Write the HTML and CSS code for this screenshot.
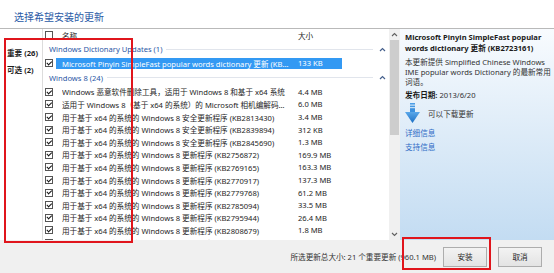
FILE: index.html
```html
<!DOCTYPE html>
<html lang="zh-CN">
<head>
    <meta charset="UTF-8">
    <title>Windows 更新 - 选择希望安装的更新</title>
    <link rel="stylesheet" href="styles.css">
</head>
<body>
    <div class="window">
        <!-- Title -->
        <div class="title-bar">
            <h1>选择希望安装的更新</h1>
        </div>

        <div class="main">
            <!-- Categories -->
            <ul class="categories">
                <li>重要 (26)</li>
                <li>可选 (2)</li>
            </ul>

            <!-- Update list -->
            <div class="update-list">
                <div class="list-head">
                    <span class="box"></span>
                    <span class="col-name">名称</span>
                    <span class="col-size">大小</span>
                </div>

                <div class="group">
                    <span>Windows Dictionary Updates (1)</span>
                    <i class="group-line"></i>
                    <svg class="chevron" width="7" height="5" viewBox="0 0 7 5"><path d="M1 4 L3.5 1.5 L6 4" fill="none" stroke="#45608c" stroke-width="1.2"/></svg>
                </div>
                <div class="row selected">
                    <span class="box checked"></span>
                    <span class="cell"><span class="name">Microsoft Pinyin SimpleFast popular words dictionary 更新 (KB2723161)</span><span class="size">133 KB</span></span>
                </div>

                <div class="group">
                    <span>Windows 8 (24)</span>
                    <i class="group-line"></i>
                    <svg class="chevron" width="7" height="5" viewBox="0 0 7 5"><path d="M1 4 L3.5 1.5 L6 4" fill="none" stroke="#45608c" stroke-width="1.2"/></svg>
                </div>
                <div class="row">
                    <span class="box checked"></span>
                    <span class="cell"><span class="name">Windows 恶意软件删除工具，适用于 Windows 8 和基于 x64 系统</span><span class="size">4.4 MB</span></span>
                </div>
                <div class="row">
                    <span class="box checked"></span>
                    <span class="cell"><span class="name">适用于 Windows 8（基于 x64 的系统）的 Microsoft 相机编解码器包</span><span class="size">6.0 MB</span></span>
                </div>
                <div class="row">
                    <span class="box checked"></span>
                    <span class="cell"><span class="name">用于基于 x64 的系统的 Windows 8 安全更新程序 (KB2813430)</span><span class="size">3.4 MB</span></span>
                </div>
                <div class="row">
                    <span class="box checked"></span>
                    <span class="cell"><span class="name">用于基于 x64 的系统的 Windows 8 安全更新程序 (KB2839894)</span><span class="size">312 KB</span></span>
                </div>
                <div class="row">
                    <span class="box checked"></span>
                    <span class="cell"><span class="name">用于基于 x64 的系统的 Windows 8 安全更新程序 (KB2845690)</span><span class="size">1.3 MB</span></span>
                </div>
                <div class="row">
                    <span class="box checked"></span>
                    <span class="cell"><span class="name">用于基于 x64 的系统的 Windows 8 更新程序 (KB2756872)</span><span class="size">169.9 MB</span></span>
                </div>
                <div class="row">
                    <span class="box checked"></span>
                    <span class="cell"><span class="name">用于基于 x64 的系统的 Windows 8 更新程序 (KB2769165)</span><span class="size">163.3 MB</span></span>
                </div>
                <div class="row">
                    <span class="box checked"></span>
                    <span class="cell"><span class="name">用于基于 x64 的系统的 Windows 8 更新程序 (KB2770917)</span><span class="size">137.3 MB</span></span>
                </div>
                <div class="row">
                    <span class="box checked"></span>
                    <span class="cell"><span class="name">用于基于 x64 的系统的 Windows 8 更新程序 (KB2779768)</span><span class="size">61.2 MB</span></span>
                </div>
                <div class="row">
                    <span class="box checked"></span>
                    <span class="cell"><span class="name">用于基于 x64 的系统的 Windows 8 更新程序 (KB2785094)</span><span class="size">33.5 MB</span></span>
                </div>
                <div class="row">
                    <span class="box checked"></span>
                    <span class="cell"><span class="name">用于基于 x64 的系统的 Windows 8 更新程序 (KB2795944)</span><span class="size">26.4 MB</span></span>
                </div>
                <div class="row">
                    <span class="box checked"></span>
                    <span class="cell"><span class="name">用于基于 x64 的系统的 Windows 8 更新程序 (KB2808679)</span><span class="size">1.8 MB</span></span>
                </div>
                <div class="row">
                    <span class="box"></span>
                    <span class="cell"><span class="name">用于基于 x64 的系统的 Windows 8 更新程序 (KB2811660)</span><span class="size">5.4 MB</span></span>
                </div>
            </div>

            <!-- Scrollbar -->
            <div class="scrollbar">
                <div class="sb-btn">
                    <svg width="7" height="5" viewBox="0 0 7 5"><path d="M1 4 L3.5 1.5 L6 4" fill="none" stroke="#606060" stroke-width="1.1"/></svg>
                </div>
                <div class="sb-thumb"></div>
                <div class="sb-track"></div>
                <div class="sb-btn">
                    <svg width="7" height="5" viewBox="0 0 7 5"><path d="M1 1 L3.5 3.5 L6 1" fill="none" stroke="#606060" stroke-width="1.1"/></svg>
                </div>
            </div>

            <!-- Details -->
            <div class="details">
                <h2>Microsoft Pinyin SimpleFast popular words dictionary 更新 (KB2723161)</h2>
                <p class="desc">本更新提供 Simplified Chinese Windows IME popular words Dictionary 的最新常用词语。</p>
                <p class="date"><b>发布日期:</b> 2013/6/20</p>
                <div class="download">
                    <svg width="15" height="20" viewBox="0 0 15 20">
                        <defs>
                            <linearGradient id="arrow" x1="0" y1="0" x2="0" y2="1">
                                <stop offset="0" stop-color="#5aa8ea"/>
                                <stop offset="1" stop-color="#1b6fc4"/>
                            </linearGradient>
                        </defs>
                        <rect x="5" y="0" width="5" height="1.6" fill="#4c9ee6"/>
                        <rect x="5" y="2.6" width="5" height="1.6" fill="#4599e3"/>
                        <rect x="5" y="5.2" width="5" height="4" fill="#3b90de"/>
                        <path d="M0 9 L15 9 L7.5 20 Z" fill="url(#arrow)"/>
                    </svg>
                    <span>可以下载更新</span>
                </div>
                <a href="#">详细信息</a>
                <a href="#">支持信息</a>
            </div>
        </div>

        <!-- Footer -->
        <div class="footer">
            <span class="summary">所选更新总大小: 21 个重要更新 (960.1 MB)</span>
            <button type="button">安装</button>
            <button type="button">取消</button>
        </div>

        <!-- Red annotation marks -->
        <div class="mark mark-list"></div>
        <div class="mark mark-install"></div>
    </div>
</body>
</html>
```

FILE: styles.css
```css
/* General */
body {
    margin: 0;
    font-family: "Noto Sans", "Noto Sans CJK SC", sans-serif;
    font-size: 7.6px;
    color: #1e1e1e;
    background: #fff;
}

.window {
    position: relative;
    width: 554px;
    height: 273px;
    overflow: hidden;
}

/* Title */
.title-bar {
    height: 28px;
    border-bottom: 1px solid #b9b9b9;
}

.title-bar h1 {
    margin: 0;
    padding: 12px 0 0 14px;
    font-size: 10px;
    line-height: 11px;
    font-weight: normal;
    color: #2a5aa6;
}

/* Main area */
.main {
    display: flex;
    height: 211px;
}

.categories {
    list-style: none;
    margin: 0;
    padding: 16px 0 0 7px;
    width: 35px;
    border-right: 1px solid #dcdcdc;
    font-weight: bold;
}

.categories li {
    line-height: 17px;
    white-space: nowrap;
}

/* Update list */
.update-list {
    width: 346px;
    overflow: hidden;
}

.list-head {
    display: flex;
    align-items: center;
    height: 12px;
    padding-left: 2px;
}

.col-name {
    width: 236px;
    margin-left: 9px;
}

.group {
    display: flex;
    align-items: center;
    height: 16px;
    padding: 0 3px 0 6px;
    color: #2b57a5;
    white-space: nowrap;
}

.group-line {
    flex: 1;
    height: 1px;
    margin: 0 6px 0 4px;
    background: #e1e5ec;
}

.chevron {
    flex: none;
}

.row {
    display: flex;
    align-items: center;
    height: 12.6px;
    padding-left: 2px;
}

.box {
    position: relative;
    flex: none;
    width: 8px;
    height: 8px;
    box-sizing: border-box;
    border: 1px solid #555;
    background: #fff;
}

.box.checked::after {
    content: "";
    position: absolute;
    left: 1.6px;
    top: -0.4px;
    width: 1.6px;
    height: 3.6px;
    border: solid #111;
    border-width: 0 1.4px 1.4px 0;
    transform: rotate(45deg);
}

.cell {
    display: flex;
    align-items: center;
    height: 100%;
    margin-left: 3px;
    padding-left: 6px;
}

.name {
    width: 228px;
    margin-right: 8px;
    white-space: nowrap;
    overflow: hidden;
    text-overflow: ellipsis;
}

.size {
    width: 44px;
    white-space: nowrap;
}

.row.selected .cell {
    height: 11.5px;
    background: #3399f3;
    color: #fff;
}

/* Scrollbar */
.scrollbar {
    display: flex;
    flex-direction: column;
    width: 11px;
    background: #f0f0f0;
}

.sb-btn {
    display: flex;
    align-items: center;
    justify-content: center;
    height: 11px;
}

.sb-thumb {
    height: 95px;
    margin: 0 1px;
    background: #cdcdcd;
}

.sb-track {
    flex: 1;
}

/* Details */
.details {
    flex: 1;
    padding: 3px 2px 0 5px;
    background: linear-gradient(#f8fbfe, #c3dcf2);
}

.details h2 {
    margin: 0;
    font-size: 7.6px;
    line-height: 11px;
    color: #1a1a1a;
}

.desc {
    margin: 3px 0 0;
    line-height: 10px;
    color: #333;
}

.date {
    margin: 3px 0 0;
    line-height: 10px;
    color: #333;
}

.date b {
    color: #1a1a1a;
}

.download {
    display: flex;
    align-items: center;
    height: 22px;
    margin-top: 2px;
    color: #333;
}

.download svg {
    margin-right: 8px;
}

.details a {
    display: block;
    line-height: 14px;
    color: #2e6bc6;
    text-decoration: none;
}

.details a:first-of-type {
    margin-top: 2px;
}

/* Footer */
.footer {
    display: flex;
    align-items: center;
    justify-content: flex-end;
    height: 33px;
    padding-right: 12px;
    background: #f0f0f0;
}

.summary {
    margin-right: 7px;
    color: #333;
}

.footer button {
    width: 44px;
    height: 20px;
    margin-left: 11px;
    padding: 0;
    font-family: inherit;
    font-size: 7.6px;
    color: #1e1e1e;
    border: 1px solid #adadad;
    background: linear-gradient(#f3f3f3, #e3e3e3);
}

.footer button:first-of-type {
    margin-left: 0;
}

/* Red annotation marks */
.mark {
    position: absolute;
    border: 2px solid #e0151c;
    box-sizing: border-box;
}

.mark-list {
    left: 4px;
    top: 38px;
    width: 129px;
    height: 205px;
}

.mark-install {
    left: 402px;
    top: 237px;
    width: 89px;
    height: 33px;
}
```
